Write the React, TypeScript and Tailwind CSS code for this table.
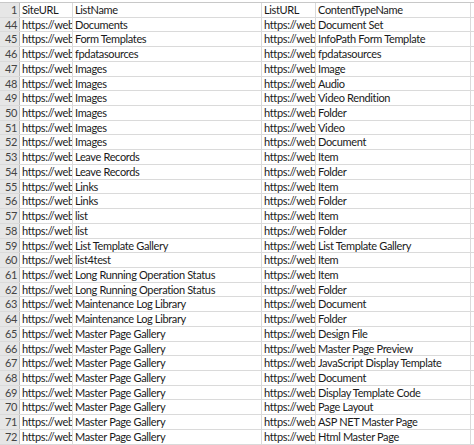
const rows: [number, string, string][] = [
  [44, "Documents", "Document Set"],
  [45, "Form Templates", "InfoPath Form Template"],
  [46, "fpdatasources", "fpdatasources"],
  [47, "Images", "Image"],
  [48, "Images", "Audio"],
  [49, "Images", "Video Rendition"],
  [50, "Images", "Folder"],
  [51, "Images", "Video"],
  [52, "Images", "Document"],
  [53, "Leave Records", "Item"],
  [54, "Leave Records", "Folder"],
  [55, "Links", "Item"],
  [56, "Links", "Folder"],
  [57, "list", "Item"],
  [58, "list", "Folder"],
  [59, "List Template Gallery", "List Template Gallery"],
  [60, "list4test", "Item"],
  [61, "Long Running Operation Status", "Item"],
  [62, "Long Running Operation Status", "Folder"],
  [63, "Maintenance Log Library", "Document"],
  [64, "Maintenance Log Library", "Folder"],
  [65, "Master Page Gallery", "Design File"],
  [66, "Master Page Gallery", "Master Page Preview"],
  [67, "Master Page Gallery", "JavaScript Display Template"],
  [68, "Master Page Gallery", "Document"],
  [69, "Master Page Gallery", "Display Template Code"],
  [70, "Master Page Gallery", "Page Layout"],
  [71, "Master Page Gallery", "ASP NET Master Page"],
  [72, "Master Page Gallery", "Html Master Page"],
];

const url = "https://webxsite.sharepoint.com/sites/dev";

function Row({ num, cells }: { num: number; cells: string[] }) {
  return (
    <div className="flex h-[14.72px] border-b border-[#dadada]">
      <div className="w-[20px] shrink-0 border-r border-[#bdbdbd] bg-[#e6e6e6] pr-[2px] text-right text-[#444]">
        {num}
      </div>
      <div className="w-[52px] shrink-0 overflow-hidden whitespace-nowrap pl-[2px]">{cells[0]}</div>
      <div className="w-[189px] shrink-0 overflow-hidden whitespace-nowrap border-l border-[#dadada] pl-[2px]">
        {cells[1]}
      </div>
      <div className="w-[54px] shrink-0 overflow-hidden whitespace-nowrap border-l border-[#dadada] pl-[2px]">
        {cells[2]}
      </div>
      <div className="w-[155px] shrink-0 overflow-hidden whitespace-nowrap border-l border-[#dadada] pl-[2px]">
        {cells[3]}
      </div>
      <div className="flex-1 border-l border-[#dadada]" />
    </div>
  );
}

export default function App() {
  return (
    <div className="h-[445px] w-[474px] overflow-hidden bg-white pt-[2px] font-['Lato',sans-serif] text-[11px] leading-[14px] tracking-[-0.35px] text-[#1a1a1a]">
      <div className="border-t border-[#c8c8c8]">
        <Row num={1} cells={["SiteURL", "ListName", "ListURL", "ContentTypeName"]} />
        {rows.map(([n, list, ct]) => (
          <Row key={n} num={n} cells={[url, list, url, ct]} />
        ))}
      </div>
    </div>
  );
}
